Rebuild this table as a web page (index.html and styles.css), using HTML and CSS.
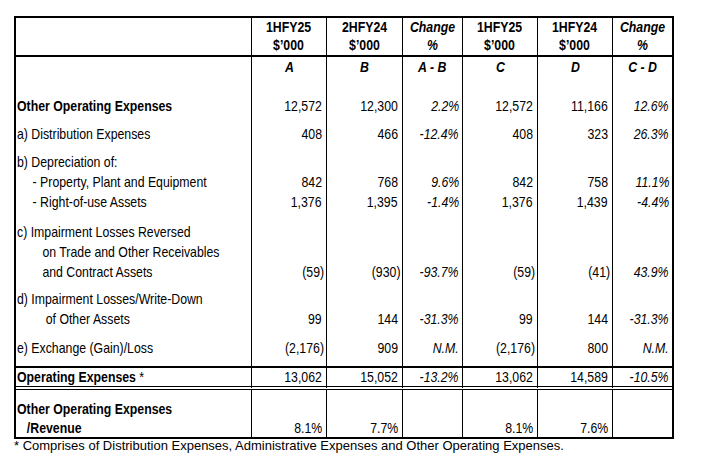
FILE: index.html
```html
<!DOCTYPE html>
<html lang="en">
<head>
<meta charset="utf-8">
<title>Other Operating Expenses</title>
<link rel="stylesheet" href="styles.css">
</head>
<body>
<div class="page">
  <table class="fin">
    <thead>
      <tr class="head">
        <th class="lbl w-lbl"></th>
        <th class="w-a"><span class="t">1HFY25<br>$’000</span></th>
        <th class="w-b"><span class="t">2HFY24<br>$’000</span></th>
        <th class="w-ch it"><span class="t">Change<br>%</span></th>
        <th class="w-a"><span class="t">1HFY25<br>$’000</span></th>
        <th class="w-a"><span class="t">1HFY24<br>$’000</span></th>
        <th class="w-ch it"><span class="t">Change<br>%</span></th>
      </tr>
    </thead>
    <tbody>
      <tr class="letters">
        <td class="lbl"></td>
        <td><span class="t">A</span></td>
        <td><span class="t">B</span></td>
        <td><span class="t">A - B</span></td>
        <td><span class="t">C</span></td>
        <td><span class="t">D</span></td>
        <td><span class="t">C - D</span></td>
      </tr>
      <tr class="r-ooe">
        <td class="lbl b"><span class="t">Other Operating Expenses</span></td>
        <td class="num"><span class="t">12,572</span></td>
        <td class="num"><span class="t">12,300</span></td>
        <td class="pct"><span class="t">2.2%</span></td>
        <td class="num"><span class="t">12,572</span></td>
        <td class="num"><span class="t">11,166</span></td>
        <td class="pct"><span class="t">12.6%</span></td>
      </tr>
      <tr class="r-a">
        <td class="lbl"><span class="t">a) Distribution Expenses</span></td>
        <td class="num"><span class="t">408</span></td>
        <td class="num"><span class="t">466</span></td>
        <td class="pct"><span class="t">-12.4%</span></td>
        <td class="num"><span class="t">408</span></td>
        <td class="num"><span class="t">323</span></td>
        <td class="pct"><span class="t">26.3%</span></td>
      </tr>
      <tr class="r-b">
        <td class="lbl"><span class="t">b) Depreciation of:</span></td>
        <td></td><td></td><td></td><td></td><td></td><td></td>
      </tr>
      <tr>
        <td class="lbl"><span class="t"><span class="ind1">- Property, Plant and Equipment</span></span></td>
        <td class="num"><span class="t">842</span></td>
        <td class="num"><span class="t">768</span></td>
        <td class="pct"><span class="t">9.6%</span></td>
        <td class="num"><span class="t">842</span></td>
        <td class="num"><span class="t">758</span></td>
        <td class="pct"><span class="t">11.1%</span></td>
      </tr>
      <tr>
        <td class="lbl"><span class="t"><span class="ind1">- Right-of-use Assets</span></span></td>
        <td class="num"><span class="t">1,376</span></td>
        <td class="num"><span class="t">1,395</span></td>
        <td class="pct"><span class="t">-1.4%</span></td>
        <td class="num"><span class="t">1,376</span></td>
        <td class="num"><span class="t">1,439</span></td>
        <td class="pct"><span class="t">-4.4%</span></td>
      </tr>
      <tr class="r-c">
        <td class="lbl"><span class="t">c) Impairment Losses Reversed<br><span class="ind2">on Trade and Other Receivables</span><br><span class="ind2">and Contract Assets</span></span></td>
        <td class="num"><span class="t">(59<span class="cp">)</span></span></td>
        <td class="num"><span class="t">(930<span class="cp">)</span></span></td>
        <td class="pct"><span class="t">-93.7%</span></td>
        <td class="num"><span class="t">(59<span class="cp">)</span></span></td>
        <td class="num"><span class="t">(41<span class="cp">)</span></span></td>
        <td class="pct"><span class="t">43.9%</span></td>
      </tr>
      <tr class="r-d">
        <td class="lbl"><span class="t">d) Impairment Losses/Write-Down<br><span class="ind3">of Other Assets</span></span></td>
        <td class="num"><span class="t">99</span></td>
        <td class="num"><span class="t">144</span></td>
        <td class="pct"><span class="t">-31.3%</span></td>
        <td class="num"><span class="t">99</span></td>
        <td class="num"><span class="t">144</span></td>
        <td class="pct"><span class="t">-31.3%</span></td>
      </tr>
      <tr class="r-e">
        <td class="lbl"><span class="t">e) Exchange (Gain)/Loss</span></td>
        <td class="num"><span class="t">(2,176<span class="cp">)</span></span></td>
        <td class="num"><span class="t">909</span></td>
        <td class="pct"><span class="t">N.M.</span></td>
        <td class="num"><span class="t">(2,176<span class="cp">)</span></span></td>
        <td class="num"><span class="t">800</span></td>
        <td class="pct"><span class="t">N.M.</span></td>
      </tr>
      <tr class="r-total">
        <td class="lbl"><span class="t"><span class="b">Operating Expenses</span> *</span></td>
        <td class="num"><span class="t">13,062</span></td>
        <td class="num"><span class="t">15,052</span></td>
        <td class="pct"><span class="t">-13.2%</span></td>
        <td class="num"><span class="t">13,062</span></td>
        <td class="num"><span class="t">14,589</span></td>
        <td class="pct"><span class="t">-10.5%</span></td>
      </tr>
      <tr class="r-ratio">
        <td class="lbl b"><span class="t">Other Operating Expenses<br><span class="ind4">/Revenue</span></span></td>
        <td class="num"><span class="t">8.1%</span></td>
        <td class="num"><span class="t">7.7%</span></td>
        <td class="pct"></td>
        <td class="num"><span class="t">8.1%</span></td>
        <td class="num"><span class="t">7.6%</span></td>
        <td class="pct"></td>
      </tr>
    </tbody>
  </table>
  <p class="note">* Comprises of Distribution Expenses, Administrative Expenses and Other Operating Expenses.</p>
</div>
</body>
</html>
```

FILE: styles.css
```css
html, body {
  margin: 0;
  padding: 0;
  background: #fff;
  color: #000;
}

.page {
  padding: 16px 0 0 14px;
}

/* Table rendered in a narrow Arial-like face: Liberation Sans condensed to 82% */
.fin {
  border-collapse: separate;
  border-spacing: 0;
  table-layout: fixed;
  width: 660px;
  border: 2px solid #000;
  font-family: "Liberation Sans", Arial, sans-serif;
  font-size: 15px;
  color: #000;
}

.t {
  display: inline-block;
  transform: scaleX(0.82);
  transform-origin: right center;
  white-space: nowrap;
}

.fin th,
.fin td {
  box-sizing: border-box;
  padding-top: 0;
  padding-bottom: 0;
  padding-left: 0;
  padding-right: 4px;
  line-height: 20px;
  border-left: 1px solid #000;
  vertical-align: bottom;
  white-space: nowrap;
  overflow: visible;
}

.fin .lbl {
  border-left: none;
  padding-left: 1px;
  padding-right: 0;
  text-align: left;
}

.lbl .t {
  transform-origin: left center;
}

.w-lbl { width: 235px; }
.w-a { width: 75px; }
.w-b { width: 76px; }
.w-ch { width: 60px; }

.head th {
  font-weight: bold;
  text-align: center;
  line-height: 18px;
  padding-right: 0;
  padding-bottom: 1px;
  border-bottom: 2px solid #000;
  vertical-align: top;
}

.head .t,
.letters .t {
  transform-origin: center center;
}

.head th.it {
  font-style: italic;
}

.letters td {
  font-weight: bold;
  font-style: italic;
  text-align: center;
  padding-right: 0;
}

.num {
  text-align: right;
}

.fin .pct {
  text-align: right;
  font-style: italic;
  padding-right: 3px;
}

.cp {
  margin-right: -3px;
}

.b {
  font-weight: bold;
}

.ind1 { padding-left: 19px; }
.ind2 { padding-left: 31px; }
.ind3 { padding-left: 35px; }
.ind4 { padding-left: 12px; }

.r-ooe td { padding-top: 19px; }
.r-a td { padding-top: 8px; }
.r-b td { padding-top: 8px; }
.r-c td { padding-top: 10px; }
.r-d td { padding-top: 7px; }
.r-e td { padding-top: 9px; padding-bottom: 8px; }

.fin .r-total td {
  line-height: 18px;
  border-top: 2px solid #000;
  border-bottom: 4px double #000;
}

.r-ratio td {
  padding-top: 9px;
}

.fin .r-ratio td {
  line-height: 19px;
}

.note {
  margin: 0;
  font-family: "Liberation Sans", Arial, sans-serif;
  font-size: 13px;
  line-height: 14px;
  color: #000;
}
```
